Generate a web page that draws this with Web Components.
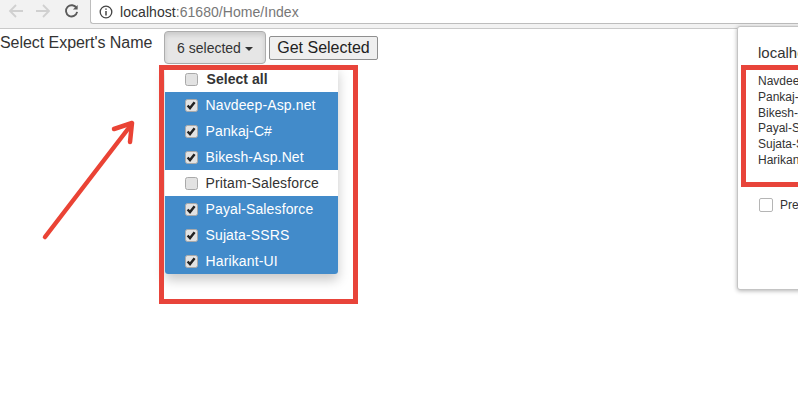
<!DOCTYPE html>
<html><head><meta charset="utf-8"><style>
html,body{margin:0;padding:0;background:#fff;width:798px;height:419px;overflow:hidden;font-family:"Liberation Sans",Arial,sans-serif}
</style></head><body>
<template id="t-bar"><style>
:host{display:flex;align-items:flex-start;height:28px;background:#f2f2f2;border-bottom:1px solid #c9c9c9;box-sizing:content-box}
.nav{display:flex;gap:13px;padding:3px 0 0 8px;width:90px;box-sizing:border-box;flex:none}
svg{display:block;flex:none}
.url{flex:1;height:25px;margin-top:-1px;background:#fff;border:1px solid #bdbdbd;border-right:0;border-radius:0 0 0 3px;display:flex;align-items:center;gap:7px;padding:1px 0 0 8px;font:14px "Liberation Sans",Arial,sans-serif;letter-spacing:.05px;color:#777;box-sizing:border-box}
b{font-weight:400;color:#333}
</style>
<div class="nav">
<svg width="15" height="16" viewBox="0 0 15 16" fill="none" stroke="#d0d0d0" stroke-width="1.8"><path d="M15 8H2M8 2L2 8l6 6"/></svg>
<svg width="15" height="16" viewBox="0 0 15 16" fill="none" stroke="#d0d0d0" stroke-width="1.8"><path d="M0 8h13M7 2l6 6-6 6"/></svg>
<svg width="15" height="16" viewBox="0 0 16 16" fill="none" stroke="#5a5a5a" stroke-width="2"><path d="M13.4 5A6 6 0 1 0 14 9"/><path d="M14.5 1.5v5h-5z" fill="#5a5a5a" stroke="none"/></svg>
</div>
<div class="url"><svg width="14" height="14" viewBox="0 0 14 14" fill="none" stroke="#444" stroke-width="1.3"><circle cx="7" cy="7" r="5.8"/><path d="M7 6v4.4M7 3.4v1.4" stroke-width="1.5"/></svg><span><b>localhost</b>:61680/Home/Index</span></div>
</template>

<template id="t-item"><style>
:host{display:flex;align-items:center;height:26px;background:#fff;color:#333;font-size:14px;letter-spacing:.13px;padding-left:20px;gap:8px;box-sizing:border-box}
:host([checked]){background:#428bca;color:#fff}
:host([bold]){font-weight:700;gap:9px;letter-spacing:.05px}
.box{width:12.5px;height:13px;box-sizing:border-box;border:1px solid #a9a9a9;border-radius:2.5px;background:#e2e2e2;flex:none;display:block}
svg{display:none;width:11px;height:11px}
:host([checked]) svg{display:block}
</style><span class="box"><svg viewBox="0 0 11 11" fill="none" stroke="#222" stroke-width="2.4"><path d="M1.6 5.5l2.4 2.6L8.6 2.2"/></svg></span><slot></slot></template>

<template id="t-select"><style>
:host{display:flex;flex-wrap:wrap;width:102px;position:relative}
button{width:103px;height:33px;margin:0;background:#e6e6e6;border:1px solid #adadad;border-radius:4px;color:#333;font:14px "Liberation Sans",Arial,sans-serif;padding:0;box-shadow:inset 0 3px 5px rgba(0,0,0,.125);display:flex;align-items:center;justify-content:center;gap:4px}
i{border-top:4px solid #333;border-left:4px solid transparent;border-right:4px solid transparent;margin-top:2px}
.menu{position:absolute;top:35px;left:1px;width:173px;background:#fff;box-shadow:0 6px 12px rgba(0,0,0,.22);border-radius:0 0 3px 3px;overflow:hidden}
</style><button>6 selected <i></i></button><div class="menu"><slot></slot></div></template>

<template id="t-dialog"><style>
:host{display:block;position:absolute;left:737px;top:26px;width:90px;height:264px;box-sizing:border-box;background:#fff;border:1px solid #c4c4c4;border-radius:3px;box-shadow:0 1px 4px rgba(0,0,0,.3);font-family:"Liberation Sans",Arial,sans-serif;overflow:hidden;padding:17px 0 0 20px;color:#333}
h1{margin:0;font-size:15px;font-weight:400;line-height:18px;white-space:nowrap}
.lines{margin-top:12px;font-size:12px;line-height:15.8px;white-space:nowrap}
.prev{display:flex;align-items:center;gap:7px;margin:29px 0 0 1px;font-size:12px;white-space:nowrap}
.cb{width:14px;height:14px;box-sizing:border-box;border:1px solid #b5b5b5;border-radius:2px;background:#fff;flex:none}
</style><h1>localhost</h1><div class="lines"><slot></slot></div><div class="prev"><span class="cb"></span>Prevent</div></template>

<template id="t-frame"><style>
:host{display:block;position:absolute;box-sizing:border-box;border:5px solid #e8443a;pointer-events:none}
</style></template>

<template id="t-page"><style>
:host{display:block;color:#333;font:16px "Liberation Sans",Arial,sans-serif}
.row{display:flex;align-items:flex-start;padding-top:2px}
.label{width:164px;flex:none;line-height:18px;padding-top:3px;white-space:nowrap;letter-spacing:-.05px}
.get{margin:5px 0 0 3px;width:109px;height:24px;padding:0;background:#efefef;border:1px solid #8f8f8f;border-radius:2px;color:#222;font:16px "Liberation Sans",Arial,sans-serif}
svg{position:absolute;left:40px;top:120px}
</style><slot name="bar"></slot><div class="row"><span class="label">Select Expert's Name</span><slot name="select"></slot><button class="get">Get Selected</button></div>
<svg width="100" height="125" viewBox="0 0 100 125" fill="none" stroke="#ea4335" stroke-width="4.5" stroke-linecap="round" stroke-linejoin="round"><path d="M5 117L91 5"/><path d="M74 9L92 3L90 22"/></svg>
<slot></slot></template>

<x-page>
<x-bar slot="bar"></x-bar>
<x-select slot="select">
<x-item bold>Select all</x-item>
<x-item checked>Navdeep-Asp.net</x-item>
<x-item checked>Pankaj-C#</x-item>
<x-item checked>Bikesh-Asp.Net</x-item>
<x-item>Pritam-Salesforce</x-item>
<x-item checked>Payal-Salesforce</x-item>
<x-item checked>Sujata-SSRS</x-item>
<x-item checked>Harikant-UI</x-item>
</x-select>
<x-dialog>Navdeep-Asp.net<br>Pankaj-C#<br>Bikesh-Asp.Net<br>Payal-Salesforce<br>Sujata-SSRS<br>Harikant-UI</x-dialog>
<x-frame style="left:159px;top:65px;width:199px;height:239px"></x-frame>
<x-frame style="left:741px;top:65px;width:80px;height:122px"></x-frame>
</x-page>
<script>
for (const [tag,id] of [['x-bar','t-bar'],['x-item','t-item'],['x-select','t-select'],['x-dialog','t-dialog'],['x-frame','t-frame'],['x-page','t-page']]) {
  customElements.define(tag, class extends HTMLElement {
    constructor(){super();this.attachShadow({mode:'open'}).appendChild(document.getElementById(id).content.cloneNode(true));}
  });
}
</script>
</body></html>
